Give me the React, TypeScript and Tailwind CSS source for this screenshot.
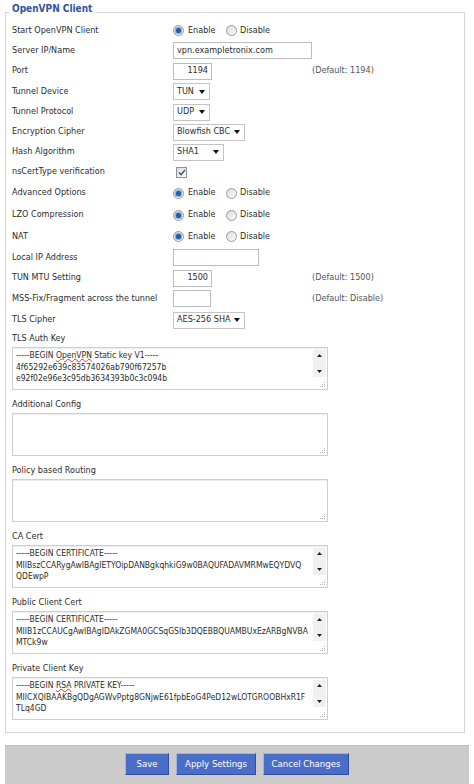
import { ReactNode } from "react";

const FONT = "font-['DejaVu_Sans_Condensed','DejaVu_Sans',sans-serif]";

const Radio = ({ checked }: { checked?: boolean }) => (
  <span className="relative inline-flex h-[11px] w-[11px] items-center justify-center rounded-full border border-[#9a9a9a] bg-gradient-to-br from-[#dcdcdc] to-[#fbfbfb]">
    {checked && <span className="h-[5px] w-[5px] rounded-full bg-[#1d5fa8] shadow-[0_0_1px_1px_#6fa0d8]" />}
  </span>
);

const EnableDisable = () => (
  <div className="flex items-center">
    <Radio checked />
    <span className="ml-[4px] w-[38px]">Enable</span>
    <Radio />
    <span className="ml-[3px]">Disable</span>
  </div>
);

const TextInput = ({ w, value, right }: { w: string; value?: string; right?: boolean }) => (
  <div className={`flex h-[17px] items-center whitespace-nowrap border border-[#b9bcc2] bg-white px-[3px] ${w} ${right ? "justify-end" : ""}`}>
    {value}
  </div>
);

const Select = ({ w, value }: { w: string; value: string }) => (
  <div className={`flex h-[17px] items-center justify-between whitespace-nowrap border border-[#c4c4c4] bg-white pl-[3px] pr-[4px] ${w}`}>
    <span>{value}</span>
    <svg width="6" height="4" viewBox="0 0 6 4" className="shrink-0">
      <path d="M0 0h6L3 4z" fill="#111" />
    </svg>
  </div>
);

const Row = ({ label, h, children, note }: { label: string; h: string; children?: ReactNode; note?: string }) => (
  <div className={`flex items-center ${h}`}>
    <div className="w-[161px] shrink-0">{label}</div>
    <div className="flex w-[139px] shrink-0 items-center">{children}</div>
    {note && <div className="text-[#555]">{note}</div>}
  </div>
);

const Grip = () => (
  <svg className="absolute bottom-[2px] right-[2px]" width="5" height="5" viewBox="0 0 5 5">
    <rect x="4" y="0" width="1" height="1" fill="#b5b5b5" />
    <rect x="2" y="2" width="1" height="1" fill="#b5b5b5" />
    <rect x="4" y="2" width="1" height="1" fill="#b5b5b5" />
    <rect x="0" y="4" width="1" height="1" fill="#b5b5b5" />
    <rect x="2" y="4" width="1" height="1" fill="#b5b5b5" />
    <rect x="4" y="4" width="1" height="1" fill="#b5b5b5" />
  </svg>
);

const Area = ({ label, lines }: { label: string; lines?: ReactNode[] }) => (
  <div className="mb-[7px]">
    <div className="flex h-[16px] items-center">{label}</div>
    <div className="relative h-[43px] w-[316px] border border-[#cfcfcf] bg-white shadow-[inset_0_1px_1px_#ececec]">
      {lines && (
        <>
          <div className="whitespace-nowrap pl-[3px] pt-[2px] text-[8.5px] leading-[11.5px]">
            {lines.map((l, i) => (
              <div key={i}>{l}</div>
            ))}
          </div>
          <div className="absolute right-[1px] top-[2px] flex h-[27px] w-[13px] flex-col items-center justify-between bg-[#f0f0f0] py-[4px]">
            <svg width="5" height="3" viewBox="0 0 5 3">
              <path d="M0 3h5L2.5 0z" fill="#222" />
            </svg>
            <svg width="5" height="3" viewBox="0 0 5 3">
              <path d="M0 0h5L2.5 3z" fill="#222" />
            </svg>
          </div>
        </>
      )}
      <Grip />
    </div>
  </div>
);

const Spell = ({ children }: { children: ReactNode }) => (
  <span className="underline decoration-[#e03030] decoration-wavy decoration-[1px] underline-offset-[0px]">{children}</span>
);

export default function App() {
  return (
    <div className={`h-[784px] w-[474px] overflow-hidden bg-white text-[9px] text-[#2b2b2b] ${FONT}`}>
      <div className="pl-[5px] pr-[9px] pt-[3px]">
        <fieldset className="border border-[#d6d6d6] px-[6px] pb-[12px]">
          <legend className="-ml-[3px] px-[3px] pb-[6px] text-[10px] font-bold leading-[12px] text-[#2d569c]">
            OpenVPN Client
          </legend>
          <Row label="Start OpenVPN Client" h="h-[19px]">
            <EnableDisable />
          </Row>
          <Row label="Server IP/Name" h="h-[21px]">
            <TextInput w="w-[144px]" value="vpn.exampletronix.com" />
          </Row>
          <Row label="Port" h="h-[20px]" note="(Default: 1194)">
            <TextInput w="w-[39px]" value="1194" right />
          </Row>
          <Row label="Tunnel Device" h="h-[21px]">
            <Select w="w-[37px]" value="TUN" />
          </Row>
          <Row label="Tunnel Protocol" h="h-[20px]">
            <Select w="w-[37px]" value="UDP" />
          </Row>
          <Row label="Encryption Cipher" h="h-[20px]">
            <Select w="w-[72px]" value="Blowfish CBC" />
          </Row>
          <Row label="Hash Algorithm" h="h-[20px]">
            <Select w="w-[51px]" value="SHA1" />
          </Row>
          <Row label="nsCertType verification" h="h-[20px]">
            <span className="ml-[3px] flex h-[11px] w-[11px] items-center justify-center border border-[#8f8f8f] bg-gradient-to-br from-[#dcdcdc] to-[#fafafa]">
              <svg width="8" height="7" viewBox="0 0 8 7">
                <path d="M1 3.5l2 2.2L7 1" fill="none" stroke="#34527a" strokeWidth="1.4" />
              </svg>
            </span>
          </Row>
          <Row label="Advanced Options" h="h-[22px]">
            <EnableDisable />
          </Row>
          <Row label="LZO Compression" h="h-[22px]">
            <EnableDisable />
          </Row>
          <Row label="NAT" h="h-[21px]">
            <EnableDisable />
          </Row>
          <Row label="Local IP Address" h="h-[21px]">
            <TextInput w="w-[86px]" />
          </Row>
          <Row label="TUN MTU Setting" h="h-[20px]" note="(Default: 1500)">
            <TextInput w="w-[39px]" value="1500" right />
          </Row>
          <Row label="MSS-Fix/Fragment across the tunnel" h="h-[21px]" note="(Default: Disable)">
            <TextInput w="w-[38px]" />
          </Row>
          <Row label="TLS Cipher" h="h-[22px]">
            <Select w="w-[72px]" value="AES-256 SHA" />
          </Row>
          <Area
            label="TLS Auth Key"
            lines={[
              <>
                -----BEGIN <Spell>OpenVPN</Spell> Static key V1-----
              </>,
              "4f65292e639c83574026ab790f67257b",
              "e92f02e96e3c95db3634393b0c3c094b",
            ]}
          />
          <Area label="Additional Config" />
          <Area label="Policy based Routing" />
          <Area
            label="CA Cert"
            lines={[
              "-----BEGIN CERTIFICATE-----",
              "MIIBszCCARygAwIBAgIETYOipDANBgkqhkiG9w0BAQUFADAVMRMwEQYDVQ",
              "QDEwpP",
            ]}
          />
          <Area
            label="Public Client Cert"
            lines={[
              "-----BEGIN CERTIFICATE-----",
              "MIIB1zCCAUCgAwIBAgIDAkZGMA0GCSqGSIb3DQEBBQUAMBUxEzARBgNVBA",
              "MTCk9w",
            ]}
          />
          <div className="-mb-[7px]">
            <Area
              label="Private Client Key"
              lines={[
                <>
                  -----BEGIN <Spell>RSA</Spell> PRIVATE KEY-----
                </>,
                "MIICXQIBAAKBgQDgAGWvPptg8GNjwE61fpbEoG4PeD12wLOTGROOBHxR1F",
                "TLq4GD",
              ]}
            />
          </div>
        </fieldset>
      </div>
      <div className="mx-[5px] mt-[12px] flex h-[40px] justify-center gap-[7px] border-t border-[#bdbdbd] bg-[#cbcbcb] pt-[7px]">
        {["Save", "Apply Settings", "Cancel Changes"].map((b, i) => (
          <button
            key={b}
            type="button"
            className={`h-[22px] border border-t-[#9fb2e4] border-l-[#9fb2e4] border-r-[#2f4f9c] border-b-[#2f4f9c] bg-[#4a6dc8] text-[9.5px] text-white ${
              i === 0 ? "w-[44px]" : i === 1 ? "w-[80px]" : "w-[86px]"
            }`}
          >
            {b}
          </button>
        ))}
      </div>
    </div>
  );
}
